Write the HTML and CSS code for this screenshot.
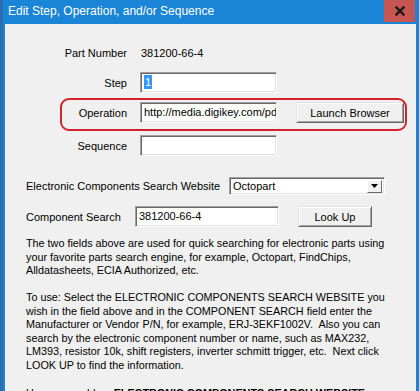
FILE: index.html
```html
<!DOCTYPE html>
<html>
<head>
<meta charset="utf-8">
<title>Edit Step, Operation, and/or Sequence</title>
<link rel="stylesheet" href="styles.css">
</head>
<body>
<div class="window">
  <div class="titlebar">
    <span class="title">Edit Step, Operation, and/or Sequence</span>
    <div class="close"><svg width="10" height="10" viewBox="0 0 10 10"><path d="M1.5 1.5 L8.5 8.5 M8.5 1.5 L1.5 8.5" stroke="#1a1a1a" stroke-width="2.4" stroke-linecap="square"/></svg></div>
  </div>
  <div class="client">
    <div class="form">
      <div class="row">
        <div class="label">Part Number</div>
        <div class="value">381200-66-4</div>
      </div>
      <div class="row">
        <div class="label">Step</div>
        <div class="field"><span class="sel">1</span></div>
      </div>
      <div class="row row-op">
        <div class="label">Operation</div>
        <div class="field">http://media.digikey.com/pdf/Data%20Sheets/381200-66-4.pdf</div>
        <div class="button btn-launch">Launch Browser</div>
      </div>
      <div class="row row-seq">
        <div class="label">Sequence</div>
        <div class="field"></div>
      </div>
    </div>
    <div class="search">
      <div class="srow srow-site">
        <div class="slabel site-label">Electronic Components Search Website</div>
        <div class="combo">
          <span class="combo-text">Octopart</span>
          <span class="combo-btn"><svg width="7" height="4" viewBox="0 0 7 4"><path d="M0 0 H7 L3.5 4 Z" fill="#000"/></svg></span>
        </div>
      </div>
      <div class="srow srow-comp">
        <div class="slabel comp-label">Component Search</div>
        <div class="field comp-field">381200-66-4</div>
        <div class="button btn-look">Look Up</div>
      </div>
    </div>
    <div class="help">
      <p>The two fields above are used for quick searching for electronic parts using<br>your favorite parts search engine, for example, Octopart, FindChips,<br>Alldatasheets, ECIA Authorized, etc.</p>
      <p class="usage">To use: Select the ELECTRONIC COMPONENTS SEARCH WEBSITE you<br>wish in the field above and in the COMPONENT SEARCH field enter the<br>Manufacturer or Vendor P/N, for example, ERJ-3EKF1002V.&nbsp; Also you can<br>search by the electronic component number or name, such as MAX232,<br>LM393, resistor 10k, shift registers, inverter schmitt trigger, etc.&nbsp; Next click<br>LOOK UP to find the information.</p>
      <p class="more">Users can add an <b>ELECTRONIC COMPONENTS SEARCH WEBSITE</b> :</p>
    </div>
  </div>
</div>
</body>
</html>
```

FILE: styles.css
```css
html, body {
  margin: 0;
  padding: 0;
}
body {
  width: 419px;
  height: 391px;
  overflow: hidden;
  background: #1a84d6;
  font-family: "Liberation Sans", Arial, sans-serif;
  font-size: 11px;
  color: #000;
}
.window {
  height: 391px;
  box-sizing: border-box;
  border-left: 3px solid #2a6db0;
  padding: 0 3px 0 2px;
  display: flex;
  flex-direction: column;
}
.titlebar {
  height: 24px;
  flex: none;
  display: flex;
  justify-content: space-between;
  align-items: flex-start;
}
.title {
  font-family: "Liberation Sans", Arial, sans-serif;
  font-size: 12px;
  line-height: 22px;
  color: #fff;
  padding-left: 3px;
}
.close {
  width: 31px;
  height: 22px;
  margin-right: 1px;
  background: #c75552;
  display: flex;
  align-items: center;
  justify-content: center;
}
.client {
  flex: 1;
  background: #f0f0f0;
  padding-top: 18px;
  overflow: hidden;
}
.form {
  display: flex;
  flex-direction: column;
  gap: 9px;
}
.row {
  display: flex;
  align-items: center;
  height: 21px;
}
.row-seq {
  margin-top: 3px;
}
.label {
  width: 122px;
  text-align: right;
  margin-right: 13px;
  flex: none;
}
.value {
  padding-left: 1px;
}
.field {
  box-sizing: border-box;
  width: 137px;
  height: 21px;
  flex: none;
  background: #fff;
  border-top: 1px solid #a0a0a0;
  border-left: 1px solid #a0a0a0;
  border-right: 1px solid #fff;
  border-bottom: 1px solid #fff;
  box-shadow: inset 1px 1px 0 #696969, inset -1px -1px 0 #e3e3e3;
  padding: 0 2px 0 3px;
  line-height: 19px;
  white-space: nowrap;
  overflow: hidden;
}
.sel {
  background: #3399ff;
  color: #fff;
  padding: 1px 1px;
}
.button {
  box-sizing: border-box;
  height: 21px;
  flex: none;
  background: #f0f0f0;
  border-top: 1px solid #e3e3e3;
  border-left: 1px solid #e3e3e3;
  border-right: 1px solid #696969;
  border-bottom: 1px solid #696969;
  box-shadow: inset 1px 1px 0 #fff, inset -1px -1px 0 #a0a0a0;
  display: flex;
  align-items: center;
  justify-content: center;
}
.btn-launch {
  width: 108px;
  margin-left: 19px;
}
.row-op {
  position: relative;
}
.row-op::after {
  content: "";
  position: absolute;
  left: 55px;
  right: 9px;
  top: -4px;
  bottom: -8px;
  border: 2.5px solid #d2232b;
  border-radius: 9px;
  pointer-events: none;
}
.search {
  margin-top: 21px;
  padding-left: 21px;
  display: flex;
  flex-direction: column;
  gap: 11px;
}
.srow {
  display: flex;
  align-items: center;
}
.slabel {
  flex: none;
}
.site-label {
  width: 203px;
}
.comp-label {
  width: 109px;
}
.combo {
  box-sizing: border-box;
  width: 156px;
  height: 18px;
  background: #fff;
  border-top: 1px solid #a0a0a0;
  border-left: 1px solid #a0a0a0;
  border-right: 1px solid #fff;
  border-bottom: 1px solid #fff;
  box-shadow: inset 1px 1px 0 #696969, inset -1px -1px 0 #e3e3e3;
  display: flex;
  align-items: center;
  justify-content: space-between;
  padding: 0 2px 0 3px;
}
.combo-btn {
  box-sizing: border-box;
  width: 15px;
  height: 13px;
  background: #f0f0f0;
  border-right: 1px solid #696969;
  border-bottom: 1px solid #696969;
  border-top: 1px solid #fff;
  border-left: 1px solid #fff;
  display: flex;
  align-items: center;
  justify-content: center;
}
.comp-field {
  width: 144px;
}
.btn-look {
  width: 74px;
  margin-left: 19px;
}
.help {
  margin-top: 10px;
  padding-left: 21px;
  font-size: 10.8px;
  line-height: 13.5px;
}
.help p {
  margin: 0 0 13.5px 0;
  white-space: nowrap;
}
.help .usage {
  margin-bottom: 15px;
}
.more b {
  font-weight: bold;
}
```
